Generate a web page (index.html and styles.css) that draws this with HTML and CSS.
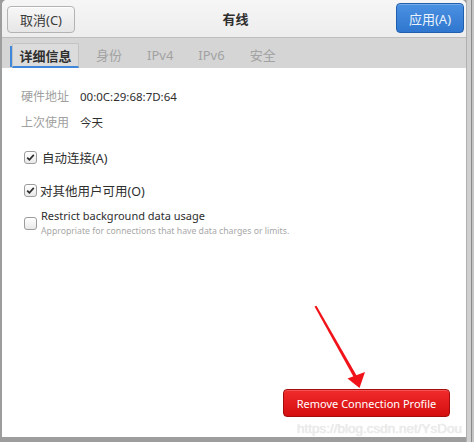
FILE: index.html
```html
<!DOCTYPE html>
<html lang="zh-CN">
<head>
<meta charset="utf-8">
<title>有线</title>
<link rel="stylesheet" href="styles.css">
</head>
<body>
<div class="window">
  <header class="header">
    <button class="btn cancel">取消(C)</button>
    <div class="title">有线</div>
    <button class="btn apply">应用(A)</button>
  </header>
  <nav class="tabs">
    <div class="tab active">详细信息</div>
    <div class="tab">身份</div>
    <div class="tab">IPv4</div>
    <div class="tab">IPv6</div>
    <div class="tab">安全</div>
  </nav>
  <main class="content">
    <div class="info">
      <div class="label">硬件地址</div><div class="value">00:0C:29:68:7D:64</div>
      <div class="label">上次使用</div><div class="value">今天</div>
    </div>
    <div class="checks">
      <label class="check"><span class="box checked"><svg viewBox="0 0 13 13"><path d="M2.6 6.6 L5.2 9.3 L10.4 3.4" fill="none" stroke="#2e2e2e" stroke-width="2"/></svg></span><span class="ctext">自动连接(A)</span></label>
      <label class="check second"><span class="box checked"><svg viewBox="0 0 13 13"><path d="M2.6 6.6 L5.2 9.3 L10.4 3.4" fill="none" stroke="#2e2e2e" stroke-width="2"/></svg></span><span class="ctext tight">对其他用户可用(O)</span></label>
      <label class="check restrict"><span class="box"></span><span class="rtexts"><span class="rmain">Restrict background data usage</span><span class="rsub">Appropriate for connections that have data charges or limits.</span></span></label>
    </div>
    <div class="footer">
      <button class="btn remove">Remove Connection Profile</button>
    </div>
    <svg class="arrow" width="464" height="368" viewBox="0 0 464 368">
      <path d="M312.5 238.5 L314.5 237.8 L356 310 L353 311.5 Z" fill="#f0141a"/>
      <path d="M357.5 320 L345.5 310.5 L363 304 Z" fill="#f0141a"/>
    </svg>
    <div class="watermark">https://blog.csdn.net/YsDou</div>
  </main>
</div>
<div class="edge"></div>
</body>
</html>
```
FILE: styles.css
```css
html, body {
  margin: 0;
  padding: 0;
}
body {
  width: 474px;
  height: 442px;
  background: #9d9d9d;
  display: flex;
  align-items: flex-start;
  overflow: hidden;
  font-family: "Noto Sans", "Noto Sans CJK SC", sans-serif;
}
.window {
  margin-left: 2px;
  width: 464px;
  height: 437px;
  background: #ffffff;
  border-radius: 5px 5px 0 0;
  display: flex;
  flex-direction: column;
  overflow: hidden;
}
.edge {
  width: 8px;
  height: 442px;
  box-sizing: border-box;
  border-left: 1px solid #b0b0b0;
  background: linear-gradient(to right, #cfcfcf 0 4px, #8a8a8a 4px 5px, #c4c4c4 5px);
}
.header {
  border-bottom: 1px solid #bdbdbd;
  background: linear-gradient(#f6f6f6, #ededed);
  display: grid;
  grid-template-columns: 1fr auto 1fr;
  align-items: end;
  padding: 0 2px 4px 5px;
  height: 33px;
}
.btn {
  font-family: "Noto Sans", "Noto Sans CJK SC", sans-serif;
  border-radius: 4px;
  cursor: default;
  padding: 0;
}
.cancel {
  justify-self: start;
  width: 68px;
  height: 27px;
  font-size: 13px;
  color: #3a3a3a;
  background: linear-gradient(#f7f7f7, #e6e6e6);
  border: 1px solid #b3b3b3;
  box-shadow: inset 0 1px #ffffff;
}
.title {
  font-size: 13px;
  font-weight: bold;
  color: #2e2e2e;
  align-self: center;
  margin-top: 4px;
}
.apply {
  justify-self: end;
  width: 68px;
  height: 30px;
  font-size: 13px;
  color: #eaf2fb;
  background: linear-gradient(#4b91e2, #2f77cf);
  border: 1px solid #1f5fae;
  box-shadow: inset 0 1px rgba(255,255,255,0.25);
}
.tabs {
  height: 30px;
  background: #d5d5d5;
  display: flex;
  align-items: stretch;
  padding-left: 10px;
  gap: 25px;
  box-sizing: border-box;
}
.tab {
  font-size: 13px;
  color: #a2a2a2;
  display: flex;
  align-items: center;
  padding-top: 3px;
  white-space: nowrap;
}
.tab.active {
  margin-top: 5px;
  padding: 0;
  width: 67px;
  box-sizing: border-box;
  justify-content: center;
  margin-right: -8px;
  background: #dcdcdc;
  border: 1px solid #c3c3c3;
  border-bottom: 2px solid #3f87d8;
  border-radius: 2px 2px 0 0;
  font-weight: bold;
  color: #2f2f2f;
  box-shadow: -4px 1px 0 -2px #3f87d8;
}
.content {
  flex: 1;
  position: relative;
  display: flex;
  flex-direction: column;
  padding: 15px 0 0 19px;
}
.info {
  display: grid;
  grid-template-columns: 59px auto;
  grid-auto-rows: 26px;
  align-items: center;
}
.label {
  font-size: 12px;
  color: #a0a0a0;
}
.value {
  font-size: 11.5px;
  color: #2e2e2e;
}
.checks {
  margin-top: 9px;
  display: flex;
  flex-direction: column;
  padding-left: 3px;
}
.check {
  display: flex;
  align-items: center;
  height: 26px;
}
.check.second {
  margin-top: 7px;
}
.box {
  width: 13px;
  height: 13px;
  box-sizing: border-box;
  border: 1px solid #9c9c9c;
  border-radius: 3px;
  background: linear-gradient(#ffffff, #e9e9e9);
  display: flex;
  flex: none;
}
.box svg {
  width: 11px;
  height: 11px;
}
.ctext {
  font-size: 12.5px;
  color: #2e2e2e;
  margin-left: 5px;
}
.ctext.tight {
  margin-left: 3px;
}
.check.restrict {
  margin-top: 5px;
  height: auto;
}
.box + .rtexts {
  margin-left: 4px;
}
.rtexts {
  display: flex;
  flex-direction: column;
}
.rmain {
  font-size: 11px;
  color: #2e2e2e;
  line-height: 16px;
}
.rsub {
  font-size: 8.7px;
  color: #a8a8a8;
  line-height: 14px;
}
.footer {
  margin-top: auto;
  display: flex;
  justify-content: flex-end;
  padding: 0 16px 20px 0;
}
.remove {
  width: 167px;
  height: 28px;
  font-size: 11px;
  color: #ffffff;
  background: linear-gradient(#f12a2a, #d40f0f);
  border: 1px solid #a30d0d;
  box-shadow: inset 0 1px rgba(255,255,255,0.2);
}
.arrow {
  position: absolute;
  left: 0;
  top: 0;
  pointer-events: none;
}
.watermark {
  position: absolute;
  right: 4px;
  bottom: 1px;
  font-family: "Liberation Sans", Arial, sans-serif;
  font-size: 13.5px;
  color: #ececec;
  text-shadow: 0 0 1px #d8d8d8;
}
```
